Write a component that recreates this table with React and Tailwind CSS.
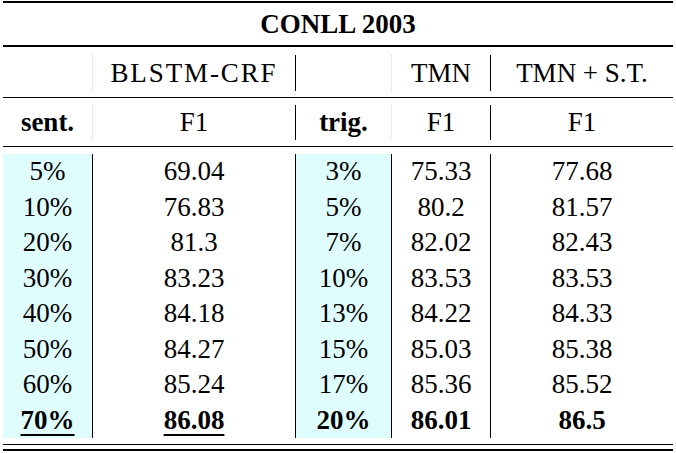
import React from "react";

const COLS = "grid grid-cols-[89px_1px_202px_1px_95px_1px_98px_1px_182px]";

const rows = [
  ["5%", "69.04", "3%", "75.33", "77.68"],
  ["10%", "76.83", "5%", "80.2", "81.57"],
  ["20%", "81.3", "7%", "82.02", "82.43"],
  ["30%", "83.23", "10%", "83.53", "83.53"],
  ["40%", "84.18", "13%", "84.22", "84.33"],
  ["50%", "84.27", "15%", "85.03", "85.38"],
  ["60%", "85.24", "17%", "85.36", "85.52"],
];

// separator inside header rows (inset from the rules)
function HeadSep({ solid, top, bottom }) {
  return (
    <div className="flex flex-col">
      <div style={{ height: top }} />
      <div
        className={
          solid
            ? "flex-1 border-l border-black"
            : "flex-1 border-l border-dotted border-gray-300"
        }
      />
      <div style={{ height: bottom }} />
    </div>
  );
}

function Cell({ children, blue, className = "" }) {
  return (
    <div
      className={`flex items-center justify-center ${
        blue ? "bg-[#e0fdfe]" : ""
      } ${className}`}
    >
      {children}
    </div>
  );
}

export default function App() {
  return (
    <div className="font-serif">
      <div className="w-[676px] h-[453px] bg-white text-black text-[27px] leading-none [font-family:Liberation_Serif,serif] px-[3px] pt-[1px]">
        {/* top rule */}
        <div className="h-[2px] bg-black" />

        <div className="h-[42px] flex items-center justify-center font-bold">
          CONLL 2003
        </div>
        <div className="h-[2px] bg-black" />

        {/* method header */}
        <div className={`${COLS} h-[50px]`}>
          <Cell />
          <HeadSep top={8} bottom={6} />
          <Cell className="tracking-[0.07em] pt-[2px]">BLSTM-CRF</Cell>
          <HeadSep solid top={8} bottom={6} />
          <Cell />
          <HeadSep top={8} bottom={6} />
          <Cell className="pt-[2px]">TMN</Cell>
          <HeadSep solid top={8} bottom={6} />
          <Cell className="pt-[2px]">TMN + S.T.</Cell>
        </div>
        <div className="h-[1px] bg-black" />

        {/* metric header */}
        <div className={`${COLS} h-[48px]`}>
          <Cell className="font-bold">sent.</Cell>
          <HeadSep top={7} bottom={6} />
          <Cell>F1</Cell>
          <HeadSep solid top={7} bottom={6} />
          <Cell className="font-bold">trig.</Cell>
          <HeadSep top={7} bottom={6} />
          <Cell>F1</Cell>
          <HeadSep solid top={7} bottom={6} />
          <Cell>F1</Cell>
        </div>
        <div className="h-[1px] bg-black" />

        {/* data */}
        <div className={`${COLS} mt-[7px]`}>
          {rows.map((r) => (
            <React.Fragment key={r[0]}>
              <Cell blue className="h-[35.5px]">{r[0]}</Cell>
              <div className="bg-black" />
              <Cell>{r[1]}</Cell>
              <div className="bg-black" />
              <Cell blue>{r[2]}</Cell>
              <div className="bg-black" />
              <Cell>{r[3]}</Cell>
              <div className="bg-black" />
              <Cell>{r[4]}</Cell>
            </React.Fragment>
          ))}
          <Cell blue className="h-[35.5px] font-bold">
            <span className="underline decoration-[1.5px] underline-offset-[5px]">70%</span>
          </Cell>
          <div className="bg-black" />
          <Cell className="font-bold">
            <span className="underline decoration-[1.5px] underline-offset-[5px]">86.08</span>
          </Cell>
          <div className="bg-black" />
          <Cell blue className="font-bold">20%</Cell>
          <div className="bg-black" />
          <Cell className="font-bold">86.01</Cell>
          <div className="bg-black" />
          <Cell className="font-bold">86.5</Cell>
        </div>

        {/* bottom double rule */}
        <div className="h-[1px] bg-black mt-[6px]" />
        <div className="h-[2px] bg-black mt-[4px]" />
      </div>
    </div>
  );
}
